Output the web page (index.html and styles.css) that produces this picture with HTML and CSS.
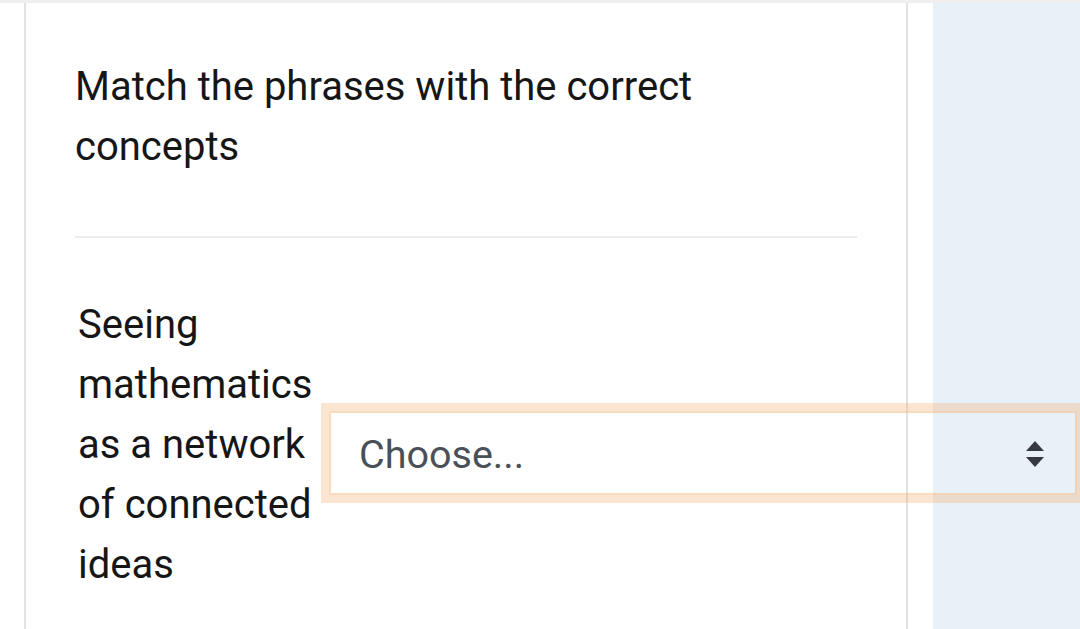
FILE: index.html
```html
<!DOCTYPE html>
<html>
<head>
<meta charset="utf-8">
<link rel="stylesheet" href="styles.css">
</head>
<body>
<div class="page">
  <div class="gutter"></div>
  <div class="card">
    <div class="qtext">Match the phrases with the correct concepts</div>
    <div class="rule"></div>
    <div class="row">
      <div class="label">Seeing mathematics as a network of connected ideas</div>
      <div class="select">
        <span class="choose">Choose...</span>
        <svg class="arrows" width="20" height="26" viewBox="0 0 20 26">
          <path d="M10 0 L19 10 L1 10 Z" fill="#343a40"/>
          <path d="M1 16 L19 16 L10 26 Z" fill="#343a40"/>
        </svg>
      </div>
    </div>
  </div>
  <div class="spacer"></div>
  <div class="side"></div>
</div>
</body>
</html>
```
FILE: styles.css
```css
html, body {
  margin: 0;
  padding: 0;
  background: #fff;
  overflow: hidden;
}
body {
  width: 1080px;
  height: 629px;
  font-family: Roboto, "Liberation Sans", sans-serif;
  color: #161616;
}
.page {
  display: flex;
  height: 626px;
  border-top: 3px solid #efefef;
}
.gutter {
  width: 24px;
  flex: none;
}
.card {
  flex: none;
  border-left: 2px solid #e2e2e2;
  border-right: 2px solid #e2e2e2;
  padding: 54px 49px 0 49px;
  box-sizing: border-box;
  width: 884px;
  position: relative;
  z-index: 1;
}
.qtext {
  font-size: 40px;
  line-height: 60px;
}
.rule {
  height: 2px;
  background: #ececec;
  margin-top: 59px;
}
.row {
  display: flex;
  align-items: flex-start;
  margin-top: 57px;
  padding-left: 3px;
}
.label {
  width: 242px;
  flex: none;
  font-size: 40px;
  line-height: 60px;
}
.select {
  flex: none;
  width: 748px;
  height: 84px;
  box-sizing: border-box;
  margin-left: 9px;
  margin-top: 116px;
  border: 2px solid rgba(245, 175, 110, 0.45);
  box-shadow: 0 0 0 8px rgba(245, 170, 100, 0.3);
  display: flex;
  align-items: center;
  justify-content: space-between;
  padding: 0 30px 0 28px;
}
.choose {
  font-size: 39.5px;
  color: #495057;
  margin-top: 3px;
}
.arrows {
  display: block;
  margin-top: 2px;
}
.spacer {
  width: 25px;
  flex: none;
}
.side {
  flex: 1;
  background: #e9f1f8;
}
```
